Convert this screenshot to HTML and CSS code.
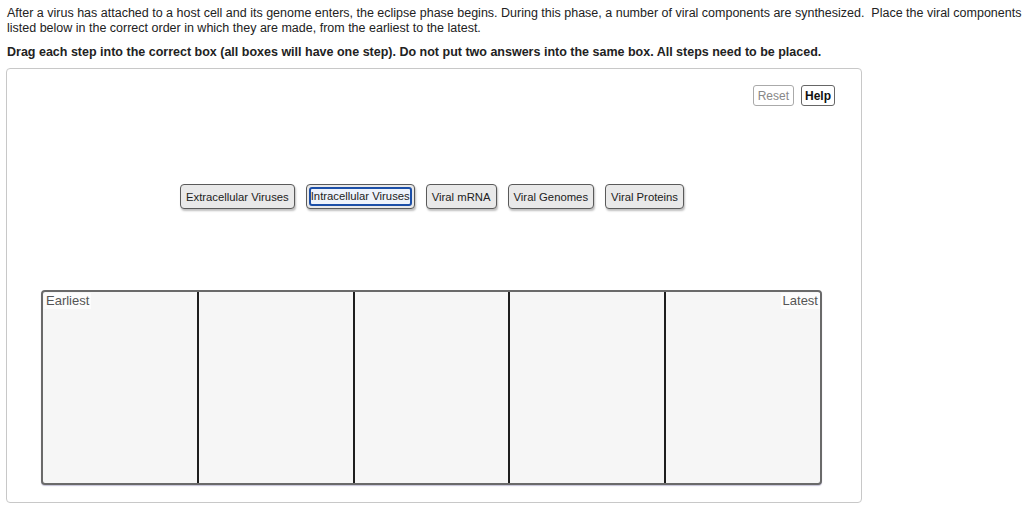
FILE: index.html
```html
<!DOCTYPE html>
<html>
<head>
<meta charset="utf-8">
<link rel="stylesheet" href="styles.css">
</head>
<body>
<p class="prompt">After a virus has attached to a host cell and its genome enters, the eclipse phase begins. During this phase, a number of viral components are synthesized.&nbsp; Place the viral components listed below in the correct order in which they are made, from the earliest to the latest.</p>
<p class="instr">Drag each step into the correct box (all boxes will have one step). Do not put two answers into the same box. All steps need to be placed.</p>
<div class="stage">
  <div class="tools">
    <button class="btn reset">Reset</button>
    <button class="btn help">Help</button>
  </div>
  <div class="chips">
    <div class="chip">Extracellular Viruses</div>
    <div class="chip focus"><span>Intracellular Viruses</span></div>
    <div class="chip">Viral mRNA</div>
    <div class="chip">Viral Genomes</div>
    <div class="chip">Viral Proteins</div>
  </div>
  <div class="zones">
    <div class="zone"><span class="lbl left">Earliest</span></div>
    <div class="zone"></div>
    <div class="zone"></div>
    <div class="zone"></div>
    <div class="zone"><span class="lbl right">Latest</span></div>
  </div>
</div>
</body>
</html>
```
FILE: styles.css
```css
html, body { margin: 0; padding: 0; background: #fff; }
body {
  font-family: "Liberation Sans", Arial, Helvetica, sans-serif;
  color: #222;
  padding: 6px 0 0 6px;
  width: 1018px;
}
.prompt {
  margin: 0;
  padding-left: 1px;
  font-size: 12.5px;
  line-height: 15px;
}
.instr {
  margin: 9px 0 0;
  padding-left: 1px;
  font-size: 12.5px;
  line-height: 15px;
  font-weight: bold;
}
.stage {
  box-sizing: border-box;
  margin-top: 8px;
  width: 856px;
  height: 435px;
  border: 1px solid #c8c8c8;
  border-radius: 4px;
  padding: 16px 26px 0 34px;
}
.tools {
  display: flex;
  justify-content: flex-end;
  gap: 7px;
  height: 21px;
}
.btn {
  font-family: "Liberation Sans", Arial, sans-serif;
  font-size: 12px;
  background: #fff;
  border: 1px solid #888;
  border-radius: 3px;
  padding: 0 4px;
  height: 21px;
}
.reset { color: #888; border-color: #aaa; }
.help { color: #111; font-weight: bold; border-color: #666; padding: 0 3px; }
.chips {
  display: flex;
  justify-content: center;
  gap: 11px;
  margin-top: 78px;
  padding-right: 12px;
}
.chip {
  box-sizing: border-box;
  height: 25px;
  padding: 0 5px;
  display: flex;
  align-items: center;
  font-size: 11.3px;
  color: #222;
  background: #e9e9e9;
  border: 1.5px solid #5a5a5a;
  border-radius: 4px;
  box-shadow: 1px 2px 2px rgba(0,0,0,0.25);
}
.chip.focus { padding: 2px; }
.chip.focus span {
  display: block;
  padding: 1px 0 0;
  line-height: 13px;
  height: 14px;
  border: 2px solid #1c4fa8;
  border-radius: 3px;
  background: #eef3fb;
}
.zones {
  display: flex;
  width: 781px;
  height: 195px;
  box-sizing: border-box;
  margin-top: 81px;
  border: 2px solid #6a6a6a;
  border-radius: 4px;
  background: #f6f6f6;
  box-shadow: 0 1px 1px rgba(90,80,140,0.35);
}
.zone {
  flex: 1;
  position: relative;
  border-left: 2px solid #1e1e1e;
}
.zone:first-child { border-left: none; }
.lbl {
  position: absolute;
  top: 1px;
  font-size: 13px;
  color: #555;
  background: #fcfcfc;
  padding: 0 2px 1px;
}
.lbl.left { left: 1px; }
.lbl.right { right: 0; }
```
